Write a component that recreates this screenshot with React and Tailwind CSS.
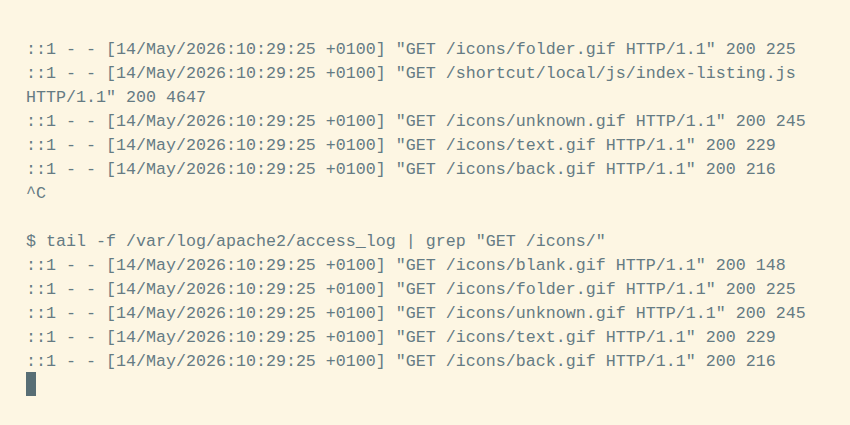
import React from 'react';

const lines = [
  '::1 - - [14/May/2026:10:29:25 +0100] "GET /icons/folder.gif HTTP/1.1" 200 225',
  '::1 - - [14/May/2026:10:29:25 +0100] "GET /shortcut/local/js/index-listing.js',
  'HTTP/1.1" 200 4647',
  '::1 - - [14/May/2026:10:29:25 +0100] "GET /icons/unknown.gif HTTP/1.1" 200 245',
  '::1 - - [14/May/2026:10:29:25 +0100] "GET /icons/text.gif HTTP/1.1" 200 229',
  '::1 - - [14/May/2026:10:29:25 +0100] "GET /icons/back.gif HTTP/1.1" 200 216',
  '^C',
  '',
  '$ tail -f /var/log/apache2/access_log | grep "GET /icons/"',
  '::1 - - [14/May/2026:10:29:25 +0100] "GET /icons/blank.gif HTTP/1.1" 200 148',
  '::1 - - [14/May/2026:10:29:25 +0100] "GET /icons/folder.gif HTTP/1.1" 200 225',
  '::1 - - [14/May/2026:10:29:25 +0100] "GET /icons/unknown.gif HTTP/1.1" 200 245',
  '::1 - - [14/May/2026:10:29:25 +0100] "GET /icons/text.gif HTTP/1.1" 200 229',
  '::1 - - [14/May/2026:10:29:25 +0100] "GET /icons/back.gif HTTP/1.1" 200 216',
];

export default function App() {
  return (
    <div className="w-[850px] h-[425px] overflow-hidden bg-[#fdf6e3] pl-[26px] pt-[36px] text-[#657b83] font-['Liberation_Mono',monospace] text-[16.67px] leading-[24px]">
      {lines.map((l, i) => (
        <div key={i} className="h-[24px] pt-[2px] whitespace-pre">
          {l}
        </div>
      ))}
      <div className="h-[24px] flex items-center">
        <span className="block w-[10px] h-[24px] bg-[#586e75]" />
      </div>
    </div>
  );
}
